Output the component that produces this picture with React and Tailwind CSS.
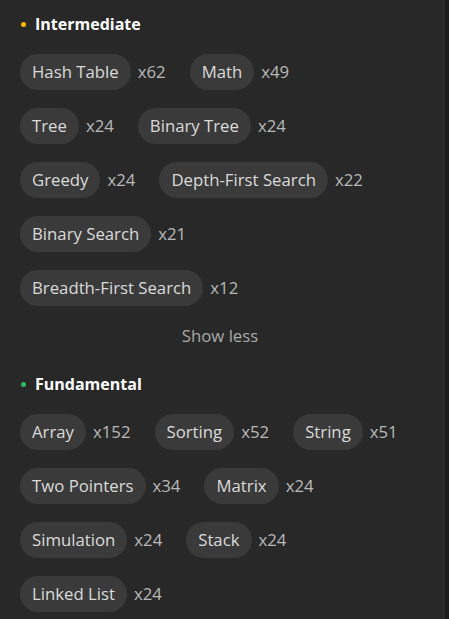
const intermediate = [
  [
    ["Hash Table", 62],
    ["Math", 49],
  ],
  [
    ["Tree", 24],
    ["Binary Tree", 24],
  ],
  [
    ["Greedy", 24],
    ["Depth-First Search", 22],
  ],
  [["Binary Search", 21]],
  [["Breadth-First Search", 12]],
];

const fundamental = [
  [
    ["Array", 152],
    ["Sorting", 52],
    ["String", 51],
  ],
  [
    ["Two Pointers", 34],
    ["Matrix", 24],
  ],
  [
    ["Simulation", 24],
    ["Stack", 24],
  ],
  [["Linked List", 24]],
];

function Tag({ name, count }) {
  return (
    <div className="flex items-center">
      <span className="h-9 px-3 rounded-full bg-[#3a3a3a] text-[#dadada] flex items-center">
        {name}
      </span>
      <span className="ml-[7px] text-[#b8b8b8]">x{count}</span>
    </div>
  );
}

function Section({ title, dot, rows }) {
  return (
    <div>
      <div className="flex items-center h-6">
        <span className={`w-[5px] h-[5px] rounded-full ${dot} ml-[1px] mr-[9px]`}></span>
        <span className="font-bold text-white text-base">{title}</span>
      </div>
      <div className="mt-[18px] flex flex-col gap-[18px]">
        {rows.map((row, i) => (
          <div key={i} className="flex items-center gap-6">
            {row.map(([name, count]) => (
              <Tag key={name} name={name} count={count} />
            ))}
          </div>
        ))}
      </div>
    </div>
  );
}

export default function App() {
  return (
    <div
      className="h-[619px] w-[449px] flex bg-[#282828] overflow-hidden text-[16.75px]"
      style={{ fontFamily: '"Segoe UI", "Open Sans", sans-serif' }}
    >
      <div className="flex-1 pl-5 pt-3">
        <Section title="Intermediate" dot="bg-[#ffb800]" rows={intermediate} />
        <div className="w-[400px] text-center text-[#a8a8a8] mt-[18px] h-6 leading-6">
          Show less
        </div>
        <div className="mt-6">
          <Section title="Fundamental" dot="bg-[#2cbb5d]" rows={fundamental} />
        </div>
      </div>
      <div className="w-1 bg-[#1c1c1c]"></div>
    </div>
  );
}
